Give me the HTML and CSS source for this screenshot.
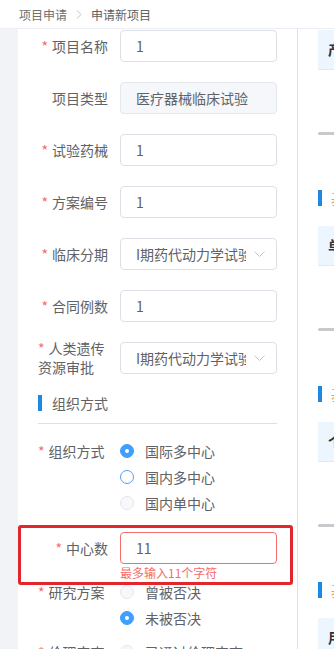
FILE: index.html
```html
<!DOCTYPE html>
<html lang="zh-CN">
<head>
<meta charset="utf-8">
<title>申请新项目</title>
<link rel="stylesheet" href="styles.css">
</head>
<body>
<div class="page">
  <div class="breadcrumb">
    <span class="crumb">项目申请</span>
    <svg class="crumb-sep" width="6" height="9" viewBox="0 0 6 9"><polyline points="1,0.5 5,4.5 1,8.5" fill="none" stroke="#c0c4cc" stroke-width="1"/></svg>
    <span class="crumb current">申请新项目</span>
  </div>
  <div class="main">
    <div class="side"></div>
    <div class="card">
      <div class="form">
        <div class="item">
          <div class="label"><span class="star">*</span>项目名称</div>
          <div class="control"><div class="input">1</div></div>
        </div>
        <div class="item">
          <div class="label">项目类型</div>
          <div class="control"><div class="input disabled">医疗器械临床试验</div></div>
        </div>
        <div class="item">
          <div class="label"><span class="star">*</span>试验药械</div>
          <div class="control"><div class="input">1</div></div>
        </div>
        <div class="item">
          <div class="label"><span class="star">*</span>方案编号</div>
          <div class="control"><div class="input">1</div></div>
        </div>
        <div class="item">
          <div class="label"><span class="star">*</span>临床分期</div>
          <div class="control">
            <div class="input select">
              <span class="select-text">I期药代动力学试验</span>
              <span class="select-arrow"><svg width="11" height="6" viewBox="0 0 11 6"><polyline points="0.5,0.5 5.5,5.5 10.5,0.5" fill="none" stroke="#c0c4cc" stroke-width="1"/></svg></span>
            </div>
          </div>
        </div>
        <div class="item">
          <div class="label"><span class="star">*</span>合同例数</div>
          <div class="control"><div class="input">1</div></div>
        </div>
        <div class="item">
          <div class="label wrap"><span class="line"><span class="star">*</span>人类遗传</span><span class="line">资源审批</span></div>
          <div class="control">
            <div class="input select">
              <span class="select-text">I期药代动力学试验</span>
              <span class="select-arrow"><svg width="11" height="6" viewBox="0 0 11 6"><polyline points="0.5,0.5 5.5,5.5 10.5,0.5" fill="none" stroke="#c0c4cc" stroke-width="1"/></svg></span>
            </div>
          </div>
        </div>

        <div class="section">
          <span class="section-bar"></span>
          <span class="section-title">组织方式</span>
        </div>

        <div class="item radio-item">
          <div class="label left"><span class="star">*</span>组织方式</div>
          <div class="control">
            <div class="radio"><span class="dot checked"><span class="inner"></span></span>国际多中心</div>
            <div class="radio"><span class="dot focus"></span>国内多中心</div>
            <div class="radio"><span class="dot disabled"></span>国内单中心</div>
          </div>
        </div>

        <div class="item error-item">
          <div class="label"><span class="star">*</span>中心数</div>
          <div class="control">
            <div class="input invalid">11</div>
            <div class="error">最多输入11个字符</div>
          </div>
        </div>

        <div class="item radio-item tight">
          <div class="label left"><span class="star">*</span>研究方案</div>
          <div class="control">
            <div class="radio"><span class="dot disabled"></span>曾被否决</div>
            <div class="radio"><span class="dot checked"><span class="inner"></span></span>未被否决</div>
          </div>
        </div>

        <div class="item radio-item">
          <div class="label left"><span class="star">*</span>伦理审查</div>
          <div class="control">
            <div class="radio"><span class="dot disabled"></span>已通过伦理审查</div>
          </div>
        </div>
      </div>
      <div class="highlight"></div>
    </div>
    <div class="right">
      <div class="rp-box">产品名称信息</div>
      <div class="rp-bar"></div>
      <div class="rp-accent"><span class="rp-accent-bar"></span><span class="rp-accent-text">基本信息</span></div>
      <div class="rp-box">单位名称信息</div>
      <div class="rp-bar"></div>
      <div class="rp-accent"><span class="rp-accent-bar"></span><span class="rp-accent-text">基本信息</span></div>
      <div class="rp-box">个人信息</div>
      <div class="rp-bar"></div>
      <div class="rp-accent"><span class="rp-accent-bar"></span><span class="rp-accent-text">基本信息</span></div>
      <div class="rp-box">用户信息</div>
    </div>
  </div>
</div>
</body>
</html>
```

FILE: styles.css
```css
* { box-sizing: border-box; }
html, body { margin: 0; padding: 0; }
body {
  width: 334px;
  height: 649px;
  overflow: hidden;
  background: #fff;
  font-family: "Noto Sans CJK SC", "Noto Sans", sans-serif;
  font-size: 14px;
  color: #606266;
}
.page { width: 334px; height: 649px; overflow: hidden; }

.breadcrumb {
  height: 29px;
  padding: 1px 0 0 19px;
  border-bottom: 1px solid #ebeef5;
  display: flex;
  align-items: center;
  font-size: 12px;
  line-height: 12px;
  color: #707070;
}
.crumb-sep { margin: 0 9px; flex: none; }
.crumb.current { color: #606266; }

.main { display: flex; height: 620px; }
.side { width: 18px; flex: none; background: #f2f3f6; }
.card {
  width: 280px;
  flex: none;
  position: relative;
  background: #fff;
  border-right: 1px solid #dcdfe6;
  padding: 1px 20px 0 20px;
}

.item { display: flex; margin-bottom: 20px; }
.label {
  width: 82px;
  flex: none;
  padding-right: 12px;
  text-align: right;
  line-height: 32px;
  height: 32px;
  white-space: nowrap;
}
.label.left { text-align: left; line-height: 26px; height: 26px; }
.label.wrap {
  text-align: left;
  display: flex;
  flex-direction: column;
  justify-content: center;
  line-height: 19px;
  padding-right: 0;
}
.line { display: block; }
.star { color: #f56c6c; margin-right: 4px; }
.control { flex: 1; min-width: 0; }

.input {
  height: 32px;
  border: 1px solid #dcdfe6;
  border-radius: 4px;
  padding: 0 15px;
  line-height: 30px;
  color: #606266;
  background: #fff;
  white-space: nowrap;
  overflow: hidden;
}
.input.disabled { background: #f5f7fa; border-color: #e4e7ed; }
.input.invalid { border-color: #f56c6c; }
.input.select { display: flex; padding-right: 0; }
.select-text { flex: 1; min-width: 0; overflow: hidden; white-space: nowrap; }
.select-arrow {
  width: 30px;
  flex: none;
  display: flex;
  align-items: center;
  padding-left: 8px;
}
.select-arrow svg { display: block; }

.section {
  display: flex;
  align-items: center;
  padding: 1px 0 12px;
  border-bottom: 1px solid #dcdfe6;
  margin-bottom: 14px;
}
.section-bar { width: 4px; height: 16px; background: #1e88e5; flex: none; }
.section-title { margin-left: 10px; line-height: 16px; color: #606266; }

.radio-item { margin-bottom: 16px; }
.radio-item.tight { margin-bottom: 8px; }
.radio {
  height: 26px;
  display: flex;
  align-items: center;
  color: #606266;
  white-space: nowrap;
}
.dot {
  width: 14px;
  height: 14px;
  flex: none;
  border: 1px solid #dcdfe6;
  border-radius: 50%;
  background: #fff;
  margin-right: 11px;
  display: flex;
  align-items: center;
  justify-content: center;
}
.dot.checked { background: #409eff; border-color: #409eff; }
.dot.focus { border-color: #5a9cf0; }
.dot.disabled { border-color: #e4e7ed; background: #f7f8fa; }
.inner { width: 4px; height: 4px; border-radius: 50%; background: #fff; }

.error-item { margin-bottom: 0; }
.error {
  font-size: 12px;
  line-height: 12px;
  padding-top: 3px;
  height: 15px;
  color: #f56c6c;
  white-space: nowrap;
}

.highlight {
  position: absolute;
  left: 0;
  top: 496px;
  width: 275px;
  height: 60px;
  border: 3px solid #e3262b;
  border-radius: 3px;
  pointer-events: none;
}

.right {
  flex: 1;
  min-width: 0;
  overflow: hidden;
  padding: 1px 0 0 20px;
  background: #fff;
}
.rp-box {
  height: 40px;
  margin-top: 20px;
  background: #edf5fe;
  border-bottom: 1px solid #e4e7ed;
  padding-left: 10px;
  line-height: 39px;
  white-space: nowrap;
  color: #303133;
  font-weight: 700;
}
.rp-box:first-child { margin-top: 0; }
.rp-bar {
  height: 3px;
  margin-top: 62px;
  background: #c8c9cc;
  border-radius: 2px 0 0 2px;
}
.rp-accent {
  margin-top: 55px;
  height: 16px;
  display: flex;
  align-items: center;
  white-space: nowrap;
}
.rp-accent-bar { width: 4px; height: 16px; background: #1e88e5; flex: none; }
.rp-accent-text { margin-left: 9px; color: #e6a23c; line-height: 16px; }
```
